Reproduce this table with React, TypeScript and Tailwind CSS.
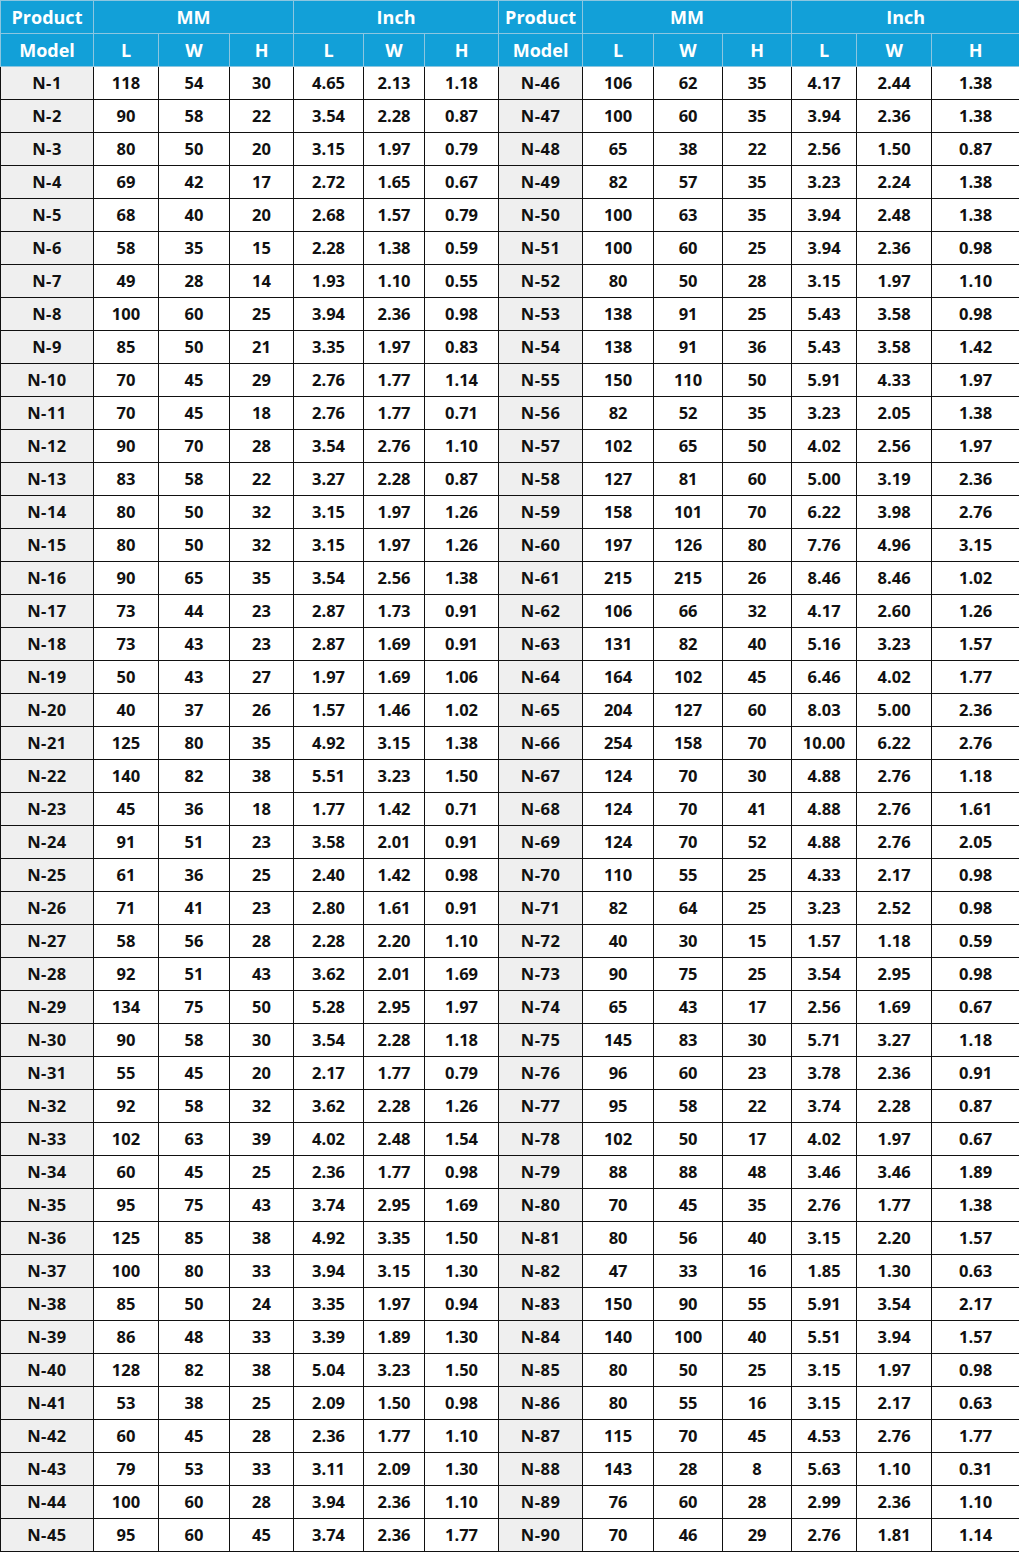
import React from "react";

type Row = [string, string, string, string, string, string, string];

const left: Row[] = [
  ["N-1", "118", "54", "30", "4.65", "2.13", "1.18"],
  ["N-2", "90", "58", "22", "3.54", "2.28", "0.87"],
  ["N-3", "80", "50", "20", "3.15", "1.97", "0.79"],
  ["N-4", "69", "42", "17", "2.72", "1.65", "0.67"],
  ["N-5", "68", "40", "20", "2.68", "1.57", "0.79"],
  ["N-6", "58", "35", "15", "2.28", "1.38", "0.59"],
  ["N-7", "49", "28", "14", "1.93", "1.10", "0.55"],
  ["N-8", "100", "60", "25", "3.94", "2.36", "0.98"],
  ["N-9", "85", "50", "21", "3.35", "1.97", "0.83"],
  ["N-10", "70", "45", "29", "2.76", "1.77", "1.14"],
  ["N-11", "70", "45", "18", "2.76", "1.77", "0.71"],
  ["N-12", "90", "70", "28", "3.54", "2.76", "1.10"],
  ["N-13", "83", "58", "22", "3.27", "2.28", "0.87"],
  ["N-14", "80", "50", "32", "3.15", "1.97", "1.26"],
  ["N-15", "80", "50", "32", "3.15", "1.97", "1.26"],
  ["N-16", "90", "65", "35", "3.54", "2.56", "1.38"],
  ["N-17", "73", "44", "23", "2.87", "1.73", "0.91"],
  ["N-18", "73", "43", "23", "2.87", "1.69", "0.91"],
  ["N-19", "50", "43", "27", "1.97", "1.69", "1.06"],
  ["N-20", "40", "37", "26", "1.57", "1.46", "1.02"],
  ["N-21", "125", "80", "35", "4.92", "3.15", "1.38"],
  ["N-22", "140", "82", "38", "5.51", "3.23", "1.50"],
  ["N-23", "45", "36", "18", "1.77", "1.42", "0.71"],
  ["N-24", "91", "51", "23", "3.58", "2.01", "0.91"],
  ["N-25", "61", "36", "25", "2.40", "1.42", "0.98"],
  ["N-26", "71", "41", "23", "2.80", "1.61", "0.91"],
  ["N-27", "58", "56", "28", "2.28", "2.20", "1.10"],
  ["N-28", "92", "51", "43", "3.62", "2.01", "1.69"],
  ["N-29", "134", "75", "50", "5.28", "2.95", "1.97"],
  ["N-30", "90", "58", "30", "3.54", "2.28", "1.18"],
  ["N-31", "55", "45", "20", "2.17", "1.77", "0.79"],
  ["N-32", "92", "58", "32", "3.62", "2.28", "1.26"],
  ["N-33", "102", "63", "39", "4.02", "2.48", "1.54"],
  ["N-34", "60", "45", "25", "2.36", "1.77", "0.98"],
  ["N-35", "95", "75", "43", "3.74", "2.95", "1.69"],
  ["N-36", "125", "85", "38", "4.92", "3.35", "1.50"],
  ["N-37", "100", "80", "33", "3.94", "3.15", "1.30"],
  ["N-38", "85", "50", "24", "3.35", "1.97", "0.94"],
  ["N-39", "86", "48", "33", "3.39", "1.89", "1.30"],
  ["N-40", "128", "82", "38", "5.04", "3.23", "1.50"],
  ["N-41", "53", "38", "25", "2.09", "1.50", "0.98"],
  ["N-42", "60", "45", "28", "2.36", "1.77", "1.10"],
  ["N-43", "79", "53", "33", "3.11", "2.09", "1.30"],
  ["N-44", "100", "60", "28", "3.94", "2.36", "1.10"],
  ["N-45", "95", "60", "45", "3.74", "2.36", "1.77"],
];

const right: Row[] = [
  ["N-46", "106", "62", "35", "4.17", "2.44", "1.38"],
  ["N-47", "100", "60", "35", "3.94", "2.36", "1.38"],
  ["N-48", "65", "38", "22", "2.56", "1.50", "0.87"],
  ["N-49", "82", "57", "35", "3.23", "2.24", "1.38"],
  ["N-50", "100", "63", "35", "3.94", "2.48", "1.38"],
  ["N-51", "100", "60", "25", "3.94", "2.36", "0.98"],
  ["N-52", "80", "50", "28", "3.15", "1.97", "1.10"],
  ["N-53", "138", "91", "25", "5.43", "3.58", "0.98"],
  ["N-54", "138", "91", "36", "5.43", "3.58", "1.42"],
  ["N-55", "150", "110", "50", "5.91", "4.33", "1.97"],
  ["N-56", "82", "52", "35", "3.23", "2.05", "1.38"],
  ["N-57", "102", "65", "50", "4.02", "2.56", "1.97"],
  ["N-58", "127", "81", "60", "5.00", "3.19", "2.36"],
  ["N-59", "158", "101", "70", "6.22", "3.98", "2.76"],
  ["N-60", "197", "126", "80", "7.76", "4.96", "3.15"],
  ["N-61", "215", "215", "26", "8.46", "8.46", "1.02"],
  ["N-62", "106", "66", "32", "4.17", "2.60", "1.26"],
  ["N-63", "131", "82", "40", "5.16", "3.23", "1.57"],
  ["N-64", "164", "102", "45", "6.46", "4.02", "1.77"],
  ["N-65", "204", "127", "60", "8.03", "5.00", "2.36"],
  ["N-66", "254", "158", "70", "10.00", "6.22", "2.76"],
  ["N-67", "124", "70", "30", "4.88", "2.76", "1.18"],
  ["N-68", "124", "70", "41", "4.88", "2.76", "1.61"],
  ["N-69", "124", "70", "52", "4.88", "2.76", "2.05"],
  ["N-70", "110", "55", "25", "4.33", "2.17", "0.98"],
  ["N-71", "82", "64", "25", "3.23", "2.52", "0.98"],
  ["N-72", "40", "30", "15", "1.57", "1.18", "0.59"],
  ["N-73", "90", "75", "25", "3.54", "2.95", "0.98"],
  ["N-74", "65", "43", "17", "2.56", "1.69", "0.67"],
  ["N-75", "145", "83", "30", "5.71", "3.27", "1.18"],
  ["N-76", "96", "60", "23", "3.78", "2.36", "0.91"],
  ["N-77", "95", "58", "22", "3.74", "2.28", "0.87"],
  ["N-78", "102", "50", "17", "4.02", "1.97", "0.67"],
  ["N-79", "88", "88", "48", "3.46", "3.46", "1.89"],
  ["N-80", "70", "45", "35", "2.76", "1.77", "1.38"],
  ["N-81", "80", "56", "40", "3.15", "2.20", "1.57"],
  ["N-82", "47", "33", "16", "1.85", "1.30", "0.63"],
  ["N-83", "150", "90", "55", "5.91", "3.54", "2.17"],
  ["N-84", "140", "100", "40", "5.51", "3.94", "1.57"],
  ["N-85", "80", "50", "25", "3.15", "1.97", "0.98"],
  ["N-86", "80", "55", "16", "3.15", "2.17", "0.63"],
  ["N-87", "115", "70", "45", "4.53", "2.76", "1.77"],
  ["N-88", "143", "28", "8", "5.63", "1.10", "0.31"],
  ["N-89", "76", "60", "28", "2.99", "2.36", "1.10"],
  ["N-90", "70", "46", "29", "2.76", "1.81", "1.14"],
];

const widths = [93, 65, 71, 64, 70, 61, 74, 84, 71, 69, 69, 65, 75, 88];

const th = "border border-[#8cc6e0] bg-[#12a0d8] text-white text-[18px] font-bold text-center align-middle p-0";
const td = "border border-[#111] text-center align-middle p-0 text-[16.5px] font-bold text-[#111]";
const model = "border border-[#111] bg-[#efefef] text-center align-middle p-0 text-[16.5px] font-bold text-[#111] tracking-[0.5px]";

export default function App() {
  return (
    <div className="w-[1019px] bg-white" style={{ fontFamily: '"Open Sans", "DejaVu Sans", sans-serif' }}>
      <table className="w-[1019px] table-fixed border-collapse">
        <colgroup>
          {widths.map((w, i) => (
            <col key={i} style={{ width: w }} />
          ))}
        </colgroup>
        <thead>
          <tr className="h-[33px]">
            <th className={th}>Product</th>
            <th className={th} colSpan={3}>MM</th>
            <th className={th} colSpan={3}>Inch</th>
            <th className={th}>Product</th>
            <th className={th} colSpan={3}>MM</th>
            <th className={th} colSpan={3}>Inch</th>
          </tr>
          <tr className="h-[33px]">
            <th className={th}>Model</th>
            <th className={th}>L</th>
            <th className={th}>W</th>
            <th className={th}>H</th>
            <th className={th}>L</th>
            <th className={th}>W</th>
            <th className={th}>H</th>
            <th className={th}>Model</th>
            <th className={th}>L</th>
            <th className={th}>W</th>
            <th className={th}>H</th>
            <th className={th}>L</th>
            <th className={th}>W</th>
            <th className={th}>H</th>
          </tr>
        </thead>
        <tbody>
          {left.map((row, i) => (
            <tr key={row[0]} className="h-[33px]">
              <td className={model}>{row[0]}</td>
              {row.slice(1).map((v, j) => (
                <td key={j} className={td}>{v}</td>
              ))}
              <td className={model}>{right[i][0]}</td>
              {right[i].slice(1).map((v, j) => (
                <td key={j} className={j === 5 ? td + " border-r-transparent" : td}>{v}</td>
              ))}
            </tr>
          ))}
        </tbody>
      </table>
    </div>
  );
}
